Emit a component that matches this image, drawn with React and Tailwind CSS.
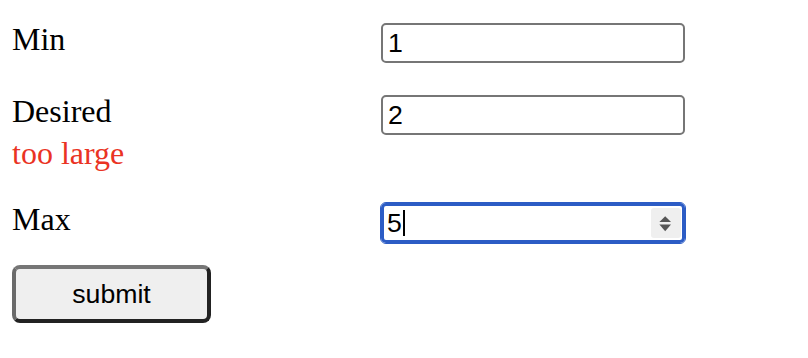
import React from "react";

function Field({ label, value, error }) {
  return (
    <div>
      <div className="flex items-start">
        <p className="w-[369px] text-[32px] leading-[37px] text-black">{label}</p>
        <div className="mt-[2px] flex h-[40px] w-[304px] items-center rounded-[5px] border-2 border-[#767676] bg-white pl-[5px] font-['Liberation_Sans',Arial,sans-serif] text-[26.67px] text-black">
          {value}
        </div>
      </div>
      {error && (
        <p className="text-[32px] leading-[37px] text-[#ea3323]">{error}</p>
      )}
    </div>
  );
}

function Spinner() {
  return (
    <div className="ml-auto mr-[1px] h-[30px] w-[30px] rounded-[3px] bg-[#efefef]">
      <svg width="30" height="30" viewBox="0 0 30 30">
        <polygon points="8.4,14 20,14 14.2,8.3" fill="#555555" />
        <polygon points="8.4,16.6 20,16.6 14.2,23.3" fill="#555555" />
      </svg>
    </div>
  );
}

export default function App() {
  return (
    <div className="min-h-[358px] w-[808px] bg-white pl-[12px] pt-[21px] font-['Liberation_Serif','Times_New_Roman',serif]">
      <div className="mb-[30px]">
        <Field label="Min" value="1" />
      </div>

      <div className="mb-[29px]">
        <Field label="Desired" value="2" error="too large" />
      </div>

      <div className="flex items-start">
        <p className="w-[369px] text-[32px] leading-[37px] text-black">Max</p>
        <div className="mt-[2px] flex h-[40px] w-[304px] items-center rounded-[5px] border-[3px] border-[#2c5cc5] bg-white pl-[3px] font-['Liberation_Sans',Arial,sans-serif] text-[26.67px] text-black outline outline-1 outline-[#2c5cc5]">
          <span>5</span>
          <span className="ml-[1px] inline-block h-[26px] w-[2px] bg-black"></span>
          <Spinner />
        </div>
      </div>

      <button className="mt-[22px] h-[58px] w-[199px] rounded-[8px] border-[4px] border-t-[#767676] border-l-[#6a6a6a] border-b-[#222222] border-r-[#222222] bg-[#efefef] font-['Liberation_Sans',Arial,sans-serif] text-[26.67px] text-black">
        submit
      </button>
    </div>
  );
}
